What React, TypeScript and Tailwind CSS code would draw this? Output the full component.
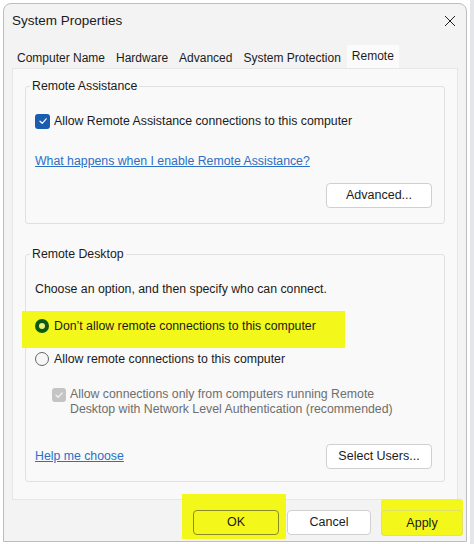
const FONT = '"Liberation Sans", Arial, sans-serif'

function CheckMark({ color }: { color: string }) {
  return (
    <svg width="10" height="10" viewBox="0 0 10 10" fill="none">
      <path d="M2 5.2 L4.2 7.3 L8.2 2.8" stroke={color} strokeWidth="1.2" strokeLinecap="round" strokeLinejoin="round" />
    </svg>
  )
}

function Button({ label, className = '' }: { label: string; className?: string }) {
  return (
    <div
      className={`flex h-[25px] items-center justify-center rounded-[4px] border border-[#d0d0d0] bg-white text-[12.5px] text-[#1b1b1b] ${className}`}
    >
      {label}
    </div>
  )
}

export default function App() {
  return (
    <div className="flex h-[544px] w-[474px] overflow-hidden bg-white" style={{ fontFamily: FONT }}>
      <div className="ml-[3px] mt-[3px] flex h-[539px] w-[464px] flex-col rounded-t-[8px] border border-[#bdbdbd] bg-[#f3f3f3] text-[#1b1b1b]">
        {/* title bar */}
        <div className="flex h-[34px] items-center justify-between pl-[8px] pr-[10px]">
          <span className="text-[13.5px]">System Properties</span>
          <svg width="12" height="12" viewBox="0 0 12 12">
            <path d="M1 1 L11 11 M11 1 L1 11" stroke="#222" strokeWidth="1" />
          </svg>
        </div>

        {/* tabs */}
        <div className="mt-[8px] flex h-[22px] items-end pl-[8px] text-[12px]">
          <div className="flex h-[21px] items-center px-[5px]">Computer Name</div>
          <div className="ml-[1px] flex h-[21px] items-center px-[5px]">Hardware</div>
          <div className="ml-[1px] flex h-[21px] items-center px-[5px]">Advanced</div>
          <div className="ml-[1px] flex h-[21px] items-center px-[5px]">System Protection</div>
          <div className="ml-[1px] flex h-[23px] items-center bg-[#fbfbfb] px-[5px] pb-[2px]">Remote</div>
        </div>

        {/* tab panel */}
        <div className="mx-[8px] flex h-[432px] flex-col border border-[#e6e6e6] bg-[#f9f9f9] text-[12.3px]">
          {/* Remote Assistance */}
          <div className="relative ml-[12px] mt-[17px] flex h-[138px] w-[420px] flex-col rounded-[3px] border border-[#e0e0e0] pl-[9px]">
            <span className="absolute -top-[9px] left-[4px] bg-[#f9f9f9] px-[2px] leading-[16px]">Remote Assistance</span>
            <div className="mt-[24px] flex h-[20px] items-center gap-[4px]">
              <div className="flex h-[15px] w-[15px] items-center justify-center rounded-[3px] bg-[#1a5db0]">
                <CheckMark color="#ffffff" />
              </div>
              <span>Allow Remote Assistance connections to this computer</span>
            </div>
            <div className="mt-[20px] flex h-[20px] items-center">
              <span className="text-[#2b6fc7] underline">What happens when I enable Remote Assistance?</span>
            </div>
            <Button label="Advanced..." className="mr-[12px] mt-[12px] w-[106px] self-end" />
          </div>

          {/* Remote Desktop */}
          <div className="relative ml-[12px] mt-[30px] flex h-[228px] w-[420px] flex-col rounded-[3px] border border-[#e0e0e0] pl-[9px]">
            <span className="absolute -top-[9px] left-[4px] bg-[#f9f9f9] px-[2px] leading-[16px]">Remote Desktop</span>
            <div className="mt-[24px] flex h-[20px] items-center">Choose an option, and then specify who can connect.</div>
            <div className="-ml-[13px] mt-[12px] flex h-[37px] w-[323px] items-start bg-[#f4f71a] pl-[13px] pt-[5px]">
              <div className="flex h-[20px] items-center gap-[5px]">
                <div className="flex h-[14px] w-[14px] items-center justify-center rounded-full bg-[#0d5a12]">
                  <div className="h-[6px] w-[6px] rounded-full bg-[#eef27a]" />
                </div>
                <span>Don’t allow remote connections to this computer</span>
              </div>
            </div>
            <div className="mt-[1px] flex h-[20px] items-center gap-[5px]">
              <div className="h-[14px] w-[14px] rounded-full border border-[#666] bg-[#f6f6f6]" />
              <span>Allow remote connections to this computer</span>
            </div>
            <div className="ml-[17px] mt-[18px] flex items-start gap-[4px] text-[#6e6e6e]">
              <div className="mt-[1px] flex h-[14px] w-[14px] shrink-0 items-center justify-center rounded-[3px] bg-[#c4c4c4]">
                <CheckMark color="#f4f4f4" />
              </div>
              <span className="leading-[15px]">
                Allow connections only from computers running Remote
                <br />
                Desktop with Network Level Authentication (recommended)
              </span>
            </div>
            <div className="mr-[12px] mt-[27px] flex items-center justify-between">
              <span className="text-[#2b6fc7] underline">Help me choose</span>
              <Button label="Select Users..." className="w-[106px]" />
            </div>
          </div>
        </div>

        {/* button bar */}
        <div className="flex h-[40px] items-end pb-[1px] pl-[178px]">
          <div className="flex h-[45px] w-[104px] items-end bg-[#f4f71a] pb-[4px] pl-[11px] text-[12.5px]">
            <div className="flex h-[25px] w-[86px] items-center justify-center rounded-[4px] border border-[#8a8a2a] text-[#1b1b1b]">
              OK
            </div>
          </div>
          <Button label="Cancel" className="mb-[4px] ml-[1px] w-[84px]" />
          <div className="mb-[3px] ml-[10px] flex h-[37px] w-[82px] items-end rounded-[3px] bg-[#f4f71a] text-[12.5px]">
            <div className="flex h-[26px] w-full items-center justify-center rounded-[4px] border border-[#e0e06a] text-[#1b1b1b]">
              Apply
            </div>
          </div>
        </div>
      </div>
      <div className="ml-[3px] flex-1 bg-[#e4e6ea]" />
    </div>
  )
}
